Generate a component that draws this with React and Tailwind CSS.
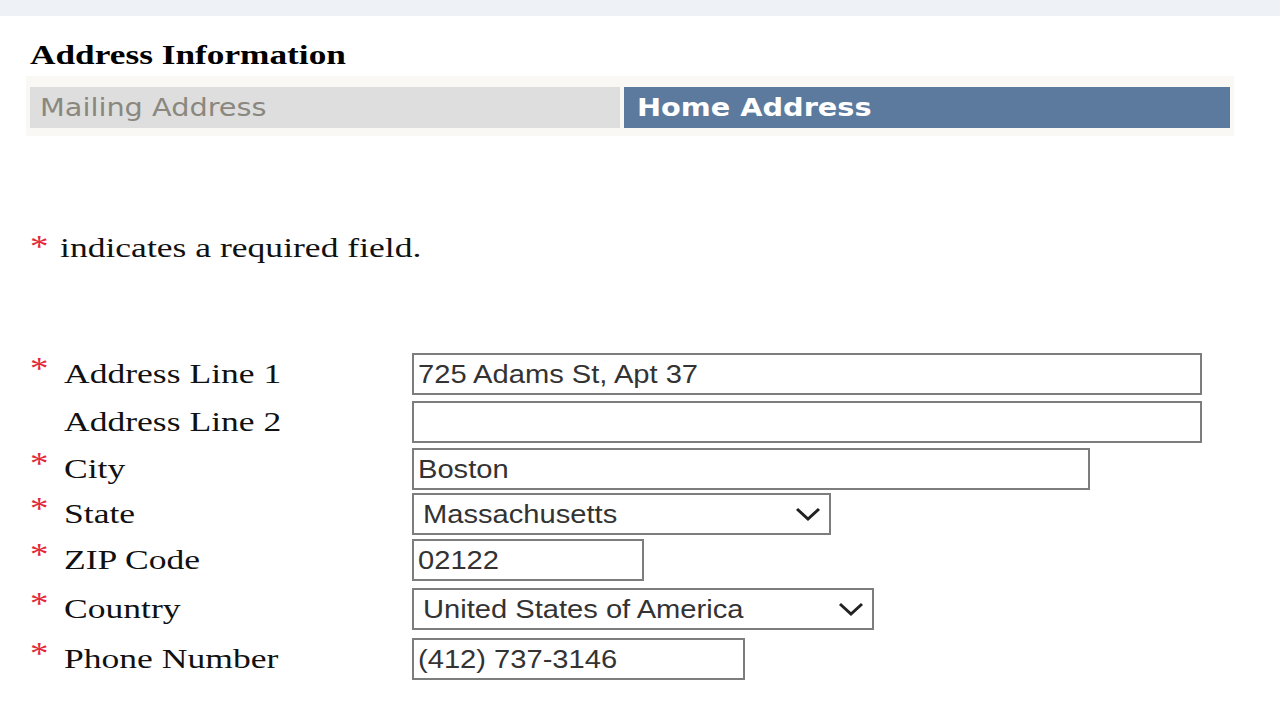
import React from "react";

const serif = { fontFamily: '"Liberation Serif", "Times New Roman", serif' };
const sans = { fontFamily: '"Liberation Sans", Arial, sans-serif' };
const verdana = { fontFamily: '"DejaVu Sans", Verdana, sans-serif' };

const rows = [
  { label: "Address Line 1", req: true, value: "725 Adams St, Apt 37", w: "w-[790px]", mt: "mt-0" },
  { label: "Address Line 2", req: false, value: "", w: "w-[790px]", mt: "mt-[6px]" },
  { label: "City", req: true, value: "Boston", w: "w-[678px]", mt: "mt-[5px]" },
  { label: "State", req: true, value: "Massachusetts", w: "w-[419px]", mt: "mt-[3px]", select: true },
  { label: "ZIP Code", req: true, value: "02122", w: "w-[232px]", mt: "mt-[4px]" },
  { label: "Country", req: true, value: "United States of America", w: "w-[462px]", mt: "mt-[7px]", select: true },
  { label: "Phone Number", req: true, value: "(412) 737-3146", w: "w-[333px]", mt: "mt-[8px]" },
];

// the screenshot text is wider than the local fonts, so stretch it a bit
function Wide({ children, className = "" }) {
  return <span className={`inline-block origin-left whitespace-nowrap ${className}`}>{children}</span>;
}

function Star({ className = "" }) {
  return (
    <span className={`block origin-left scale-x-[1.15] text-[#e3263a] text-[32px] leading-[26px] ${className}`}>
      *
    </span>
  );
}

function Chevron() {
  return (
    <svg width="28" height="16" viewBox="0 0 28 16" className="mr-[7px]">
      <path d="M3 3 L14 13 L25 3" fill="none" stroke="#222" strokeWidth="3" />
    </svg>
  );
}

function Field({ row }) {
  return (
    <div
      className={`${row.w} h-[42px] border-2 border-[#7d7d7d] bg-white flex items-center justify-between text-[26px] text-[#333] ${row.select ? "pl-[9px]" : "pl-[4px]"}`}
      style={sans}
    >
      <Wide className="scale-x-[1.12]">{row.value}</Wide>
      {row.select && <Chevron />}
    </div>
  );
}

export default function App() {
  return (
    <div className="min-h-screen bg-white" style={serif}>
      <div className="h-4 bg-[#eef1f5]" />

      <div className="pl-[30px]">
        <h2 className="mt-[23px] h-[32px] text-[28px] leading-[32px] font-bold text-black">
          <Wide className="scale-x-[1.26]">Address Information</Wide>
        </h2>
      </div>

      <div className="ml-[26px] w-[1208px] mt-[5px] bg-[#faf8f4] px-[4px] pt-[11px] pb-[8px] flex gap-[4px]">
        <div
          className="w-[590px] h-[41px] bg-[#dedede] flex items-center pl-[10px] text-[25px] text-[#8a887e]"
          style={verdana}
        >
          <Wide className="scale-x-[1.15]">Mailing Address</Wide>
        </div>
        <div
          className="w-[607px] h-[41px] bg-[#5b7a9d] flex items-center pl-[13px] text-[25px] font-bold text-white"
          style={verdana}
        >
          <Wide className="scale-x-[1.15]">Home Address</Wide>
        </div>
      </div>

      <div className="mt-[96px] pl-[30px] h-[32px] flex items-start text-[28px] leading-[32px] text-[#111]">
        <div className="w-[30px] h-[32px] relative">
          <Star className="absolute left-0 top-[1px]" />
        </div>
        <Wide className="scale-x-[1.27]">indicates a required field.</Wide>
      </div>

      <div className="mt-[89px] pl-[30px] flex flex-col">
        {rows.map((row) => (
          <div key={row.label} className={`${row.mt} flex items-center h-[42px]`}>
            <div className="w-[382px] h-full flex items-center relative">
              {row.req && <Star className="absolute left-0 top-[2px]" />}
              <span className="pl-[34px] h-[32px] text-[28px] leading-[32px] text-[#111]">
                <Wide className="scale-x-[1.27]">{row.label}</Wide>
              </span>
            </div>
            <Field row={row} />
          </div>
        ))}
      </div>
    </div>
  );
}
